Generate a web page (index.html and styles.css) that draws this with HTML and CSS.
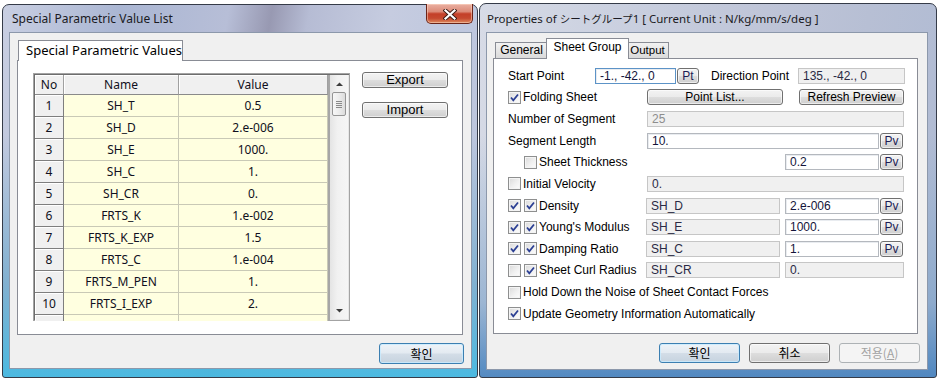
FILE: index.html
```html
<!DOCTYPE html>
<html>
<head>
<meta charset="utf-8">
<link rel="stylesheet" href="styles.css">
</head>
<body>
<div class="desk">
  <!-- LEFT WINDOW -->
  <div class="win win-left">
    <div class="titlebar">
      <span class="title">Special Parametric Value List</span>
      <span class="close">
        <svg width="14" height="11" viewBox="0 0 14 11"><path d="M2.5 1.5 L11.5 9.5 M11.5 1.5 L2.5 9.5" stroke="#3a1a14" stroke-width="4" stroke-linecap="square"/><path d="M2.5 1.5 L11.5 9.5 M11.5 1.5 L2.5 9.5" stroke="#ffffff" stroke-width="2.2" stroke-linecap="square"/></svg>
      </span>
    </div>
    <div class="client client-left">
      <div class="tabs-left"><div class="ltab">Special Parametric Values</div></div>
      <div class="lpanel">
        <div class="gridbox">
          <div class="gridarea">
            <div class="grow ghead"><div class="gc gno">No</div><div class="gc gname">Name</div><div class="gc gval">Value</div></div>
            <div class="grow"><div class="gc gno">1</div><div class="gc gname">SH_T</div><div class="gc gval">0.5</div></div>
            <div class="grow"><div class="gc gno">2</div><div class="gc gname">SH_D</div><div class="gc gval">2.e-006</div></div>
            <div class="grow"><div class="gc gno">3</div><div class="gc gname">SH_E</div><div class="gc gval">1000.</div></div>
            <div class="grow"><div class="gc gno">4</div><div class="gc gname">SH_C</div><div class="gc gval">1.</div></div>
            <div class="grow"><div class="gc gno">5</div><div class="gc gname">SH_CR</div><div class="gc gval">0.</div></div>
            <div class="grow"><div class="gc gno">6</div><div class="gc gname">FRTS_K</div><div class="gc gval">1.e-002</div></div>
            <div class="grow"><div class="gc gno">7</div><div class="gc gname">FRTS_K_EXP</div><div class="gc gval">1.5</div></div>
            <div class="grow"><div class="gc gno">8</div><div class="gc gname">FRTS_C</div><div class="gc gval">1.e-004</div></div>
            <div class="grow"><div class="gc gno">9</div><div class="gc gname">FRTS_M_PEN</div><div class="gc gval">1.</div></div>
            <div class="grow"><div class="gc gno">10</div><div class="gc gname">FRTS_I_EXP</div><div class="gc gval">2.</div></div>
            <div class="grow"><div class="gc gno"></div><div class="gc gname"></div><div class="gc gval"></div></div>
          </div>
          <div class="vscroll">
            <svg class="arr" width="9" height="6" viewBox="0 0 9 6"><path d="M1 5 L4.5 1.5 L8 5 Z" fill="#3c3c3c"/></svg>
            <div class="thumb"><i></i><i></i><i></i><i></i></div>
            <div class="track"></div>
            <svg class="arr" width="9" height="6" viewBox="0 0 9 6"><path d="M1 1 L4.5 4.5 L8 1 Z" fill="#3c3c3c"/></svg>
          </div>
        </div>
        <div class="sidebtns">
          <div class="btn sbtn">Export</div>
          <div class="btn sbtn">Import</div>
        </div>
      </div>
      <div class="footer-left"><div class="btn dbtn okl">확인</div></div>
    </div>
  </div>

  <!-- RIGHT WINDOW -->
  <div class="win win-right">
    <div class="titlebar tb-right">
      <span class="title">Properties of <span class="kana">シートグループ</span>1 [ Current Unit : N/kg/mm/s/deg ]</span>
    </div>
    <div class="client client-right">
      <div class="rtabs">
        <div class="rtab">General</div>
        <div class="rtab sel">Sheet Group</div>
        <div class="rtab">Output</div>
      </div>
      <div class="rpanel">
        <div class="frow">
          <span class="lab w87">Start Point</span>
          <span class="fld focus w81">-1., -42., 0</span>
          <span class="btn pb ml1 w22">Pt</span>
          <span class="lab ml12 w87">Direction Point</span>
          <span class="fld ro w107">135., -42., 0</span>
        </div>
        <div class="frow">
          <span class="left w139"><span class="cb on"><svg viewBox="0 0 11 11"><path d="M2 5.5 L4.3 8.3 L9 2.5" stroke="#2b3f93" stroke-width="1.8" fill="none"/></svg></span><span class="ct">Folding Sheet</span></span>
          <span class="btn w136">Point List...</span>
          <span class="btn ml16 w105">Refresh Preview</span>
        </div>
        <div class="frow">
          <span class="lab w139">Number of Segment</span>
          <span class="fld ro dis w257">25</span>
        </div>
        <div class="frow">
          <span class="lab w139">Segment Length</span>
          <span class="fld w232">10.</span>
          <span class="btn pb ml1 w23">Pv</span>
        </div>
        <div class="frow">
          <span class="left w277"><span class="cb ml16"></span><span class="ct">Sheet Thickness</span></span>
          <span class="fld w94">0.2</span>
          <span class="btn pb ml1 w23">Pv</span>
        </div>
        <div class="frow">
          <span class="left w139"><span class="cb"></span><span class="ct">Initial Velocity</span></span>
          <span class="fld ro w257">0.</span>
        </div>
        <div class="frow">
          <span class="left w138"><span class="cb on"><svg viewBox="0 0 11 11"><path d="M2 5.5 L4.3 8.3 L9 2.5" stroke="#2b3f93" stroke-width="1.8" fill="none"/></svg></span><span class="cb on ml3"><svg viewBox="0 0 11 11"><path d="M2 5.5 L4.3 8.3 L9 2.5" stroke="#2b3f93" stroke-width="1.8" fill="none"/></svg></span><span class="ct">Density</span></span>
          <span class="fld ro w134">SH_D</span>
          <span class="fld ml5 w94">2.e-006</span>
          <span class="btn pb ml1 w23">Pv</span>
        </div>
        <div class="frow">
          <span class="left w138"><span class="cb on"><svg viewBox="0 0 11 11"><path d="M2 5.5 L4.3 8.3 L9 2.5" stroke="#2b3f93" stroke-width="1.8" fill="none"/></svg></span><span class="cb on ml3"><svg viewBox="0 0 11 11"><path d="M2 5.5 L4.3 8.3 L9 2.5" stroke="#2b3f93" stroke-width="1.8" fill="none"/></svg></span><span class="ct">Young's Modulus</span></span>
          <span class="fld ro w134">SH_E</span>
          <span class="fld ml5 w94">1000.</span>
          <span class="btn pb ml1 w23">Pv</span>
        </div>
        <div class="frow">
          <span class="left w138"><span class="cb on"><svg viewBox="0 0 11 11"><path d="M2 5.5 L4.3 8.3 L9 2.5" stroke="#2b3f93" stroke-width="1.8" fill="none"/></svg></span><span class="cb on ml3"><svg viewBox="0 0 11 11"><path d="M2 5.5 L4.3 8.3 L9 2.5" stroke="#2b3f93" stroke-width="1.8" fill="none"/></svg></span><span class="ct">Damping Ratio</span></span>
          <span class="fld ro w134">SH_C</span>
          <span class="fld ml5 w94">1.</span>
          <span class="btn pb ml1 w23">Pv</span>
        </div>
        <div class="frow">
          <span class="left w138"><span class="cb"></span><span class="cb on ml3"><svg viewBox="0 0 11 11"><path d="M2 5.5 L4.3 8.3 L9 2.5" stroke="#2b3f93" stroke-width="1.8" fill="none"/></svg></span><span class="ct">Sheet Curl Radius</span></span>
          <span class="fld ro w134">SH_CR</span>
          <span class="fld ro ml5 w119">0.</span>
        </div>
        <div class="frow">
          <span class="left"><span class="cb"></span><span class="ct">Hold Down the Noise of Sheet Contact Forces</span></span>
        </div>
        <div class="frow">
          <span class="left"><span class="cb on"><svg viewBox="0 0 11 11"><path d="M2 5.5 L4.3 8.3 L9 2.5" stroke="#2b3f93" stroke-width="1.8" fill="none"/></svg></span><span class="ct">Update Geometry Information Automatically</span></span>
        </div>
      </div>
      <div class="footer-right">
        <div class="btn bbtn dbtn">확인</div>
        <div class="btn bbtn">취소</div>
        <div class="btn bbtn disabled">적용(<u>A</u>)</div>
      </div>
    </div>
  </div>
</div>
</body>
</html>
```
FILE: styles.css
```css
* { box-sizing: border-box; }
html, body { margin: 0; padding: 0; }
body {
  width: 940px; height: 381px; overflow: hidden; background: #ffffff;
  font-family: "Noto Sans", "Noto Sans CJK KR", sans-serif; color: #000;
}
.desk { position: relative; width: 940px; height: 381px; background: #ffffff; }

/* ---------- windows ---------- */
.win {
  position: absolute; display: flex; flex-direction: column;
  border: 1px solid #353b48; border-radius: 7px 7px 3px 3px;
}
.win-left {
  left: 2px; top: 4px; width: 476px; height: 374px; padding: 0 5px 8px 6px;
  background:
    linear-gradient(to bottom, rgba(255,255,255,0) 35%, rgba(110,170,205,0.75) 75%, rgba(70,185,225,0.95) 100%),
    linear-gradient(100deg, #c9cfe2 0%, #aab6d3 22%, #b7bed7 42%, #9899b2 50%, #b6bcd4 57%, #c6cce0 72%, #b8c3dc 100%);
}
.win-right {
  left: 479px; top: 3px; width: 458px; height: 375px; padding: 0 8px 7px 6px;
  background:
    linear-gradient(to bottom, rgba(255,255,255,0) 35%, rgba(120,160,200,0.6) 80%, rgba(70,130,190,0.9) 100%),
    linear-gradient(100deg, #d7dbe6 0%, #c9cfdf 30%, #bfc5d8 55%, #b7bfd4 75%, #aebad3 100%);
}
.titlebar { height: 27px; flex: none; display: flex; align-items: flex-start; }
.tb-right { height: 28px; }
.title { font-size: 12px; line-height: 14px; margin-top: 7px; padding-left: 3px; color: #1a1a22; white-space: nowrap; }
.tb-right .title { padding-left: 1px; margin-top: 8px; font-size: 11.5px; }
.kana { font-family: "Noto Sans CJK JP", sans-serif; font-size: 10.5px; }
.close {
  margin-left: auto; margin-right: -1px; margin-top: -1px; width: 47px; height: 20px;
  border: 1px solid #6b2418; border-top: none; border-radius: 0 0 5px 5px;
  background: linear-gradient(#eab0a2 0%, #dc8b78 40%, #c43f28 52%, #c5492f 75%, #de8a5e 100%);
  box-shadow: inset 0 0 0 1px rgba(255,220,200,0.5);
  display: flex; align-items: center; justify-content: center;
}
.close svg { display: block; margin-top: 1px; }

.client { flex: 1; background: #f0f0f0; border: 1px solid #8c98ab; display: flex; flex-direction: column; }

/* ---------- left client ---------- */
.client-left { padding: 7px 8px 0 7px; }
.tabs-left { height: 20px; display: flex; align-items: flex-end; }
.ltab {
  position: relative; z-index: 2; margin-left: 1px; margin-bottom: -1px;
  width: 165px; height: 21px; border: 1px solid #898c95; border-bottom: none;
  background: #fff; font-size: 13px; line-height: 19px; padding-left: 7px; white-space: nowrap;
}
.lpanel {
  height: 275px; border: 1px solid #898c95; background: #fff;
  display: flex; align-items: flex-start; padding: 12px 0 0 15px;
}
.gridbox {
  width: 317px; height: 248px; display: flex; border: 1px solid #a3a3a3;
  box-shadow: inset 1px 1px 0 #6d6d6d, inset -1px -1px 0 #e6e6e6;
  padding: 1px 1px 1px 1px; background: #ffffe0;
}
.gridarea { width: 295px; height: 246px; overflow: hidden; border-right: 2px solid #a6a6a6; }
.grow { display: grid; grid-template-columns: 29px 115px 149px; height: 22px; }
.ghead { height: 20px; }
.gc {
  display: flex; align-items: center; justify-content: center;
  font-size: 12px; line-height: 14px; color: #101020; white-space: nowrap;
  border-right: 1px solid #c9c9b6; border-bottom: 1px solid #c9c9b6; background: #ffffe0;
}
.gno { background: #f0f0f0; border-right: 1px solid #7e7e7e; border-bottom: 1px solid #7e7e7e; box-shadow: inset 1px 1px 0 #ffffff; }
.ghead .gc { background: #f0f0f0; border-bottom: 1px solid #8a8a8a; border-right: 1px solid #a0a0a0; box-shadow: inset 1px 1px 0 #ffffff; }
.vscroll {
  width: 18px; display: flex; flex-direction: column; align-items: center;
  background: linear-gradient(to right, #e4e4e4, #f1f1f1 40%, #f5f5f5);
}
.vscroll .arr { display: block; margin-top: 6px; flex: none; }
.vscroll .arr:last-child { margin-top: 0; margin-bottom: 5px; }
.thumb {
  margin-top: 5px; width: 14px; height: 24px; border: 1px solid #959595; border-radius: 2px;
  background: linear-gradient(to right, #f7f7f7, #ececec 50%, #dcdcdc);
  display: flex; flex-direction: column; align-items: center; justify-content: center; gap: 1px;
}
.thumb i { display: block; width: 6px; height: 1px; background: #8a8a8a; }
.track { flex: 1; }
.sidebtns { margin-left: 12px; display: flex; flex-direction: column; gap: 14px; margin-top: -1px; }

/* buttons */
.btn {
  display: flex; align-items: center; justify-content: center; flex: none;
  height: 16px; border: 1px solid #707070; border-radius: 3px;
  background: linear-gradient(#f3f3f3 0%, #ebebeb 48%, #dddddd 52%, #cfcfcf 100%);
  font-family: "Liberation Sans", Arial, sans-serif; font-size: 12px; line-height: 14px; color: #000;
  white-space: nowrap; box-shadow: inset 0 0 0 1px rgba(255,255,255,0.6);
}
.sbtn { width: 86px; font-size: 13px; }
.dbtn {
  border-color: #3c7fb1;
  background: linear-gradient(#eef3f8 0%, #e3eaf1 48%, #d3dde7 52%, #c6d3df 100%);
  box-shadow: inset 0 0 0 1px rgba(200,235,255,0.8);
}
.footer-left { display: flex; justify-content: flex-end; margin-top: 8px; margin-right: -1px; }
.okl { width: 85px; height: 21px; font-family: "Noto Sans CJK KR", sans-serif; font-size: 12px; }

/* ---------- right client ---------- */
.client-right { padding: 5px 0 0 6px; }
.rtabs { height: 20px; display: flex; align-items: flex-end; padding-left: 2px; }
.rtab {
  height: 16px; border: 1px solid #898c95; border-bottom: none; margin-left: -1px;
  background: linear-gradient(#f2f2f2, #e6e6e6 50%, #dadada);
  font-family: "Liberation Sans", Arial, sans-serif; font-size: 12px; line-height: 15px;
  padding: 0 4px; white-space: nowrap; color: #000; text-align: center;
}
.rtab:first-child { margin-left: 0; width: 53px; padding: 0 2px; }
.rtab:last-child { width: 43px; padding: 0 1px; font-size: 11.5px; }
.rtab.sel {
  position: relative; z-index: 2; height: 21px; margin: 0 -2px -1px -2px; width: 83px;
  background: #fff; line-height: 17px; padding: 0 4px;
}
.rpanel {
  width: 425px; height: 276px; border: 1px solid #898c95; background: #fff;
  padding: 6px 0 0 14px;
  font-family: "Liberation Sans", Arial, sans-serif; font-size: 12px;
}
.frow { height: 21.64px; display: flex; align-items: center; white-space: nowrap; }
.lab, .left { display: flex; align-items: center; flex: none; line-height: 14px; }
.ct { margin-left: 2px; line-height: 14px; }
.cb {
  width: 13px; height: 13px; flex: none; border: 1px solid #8e8f8f;
  background: linear-gradient(135deg, #d9d9d9 0%, #f0f0f0 55%, #fdfdfd 100%);
  box-shadow: inset 0 0 0 1px #f4f4f4; display: flex; align-items: center; justify-content: center;
}
.cb svg { width: 11px; height: 11px; display: block; }
.fld {
  height: 16px; flex: none; display: flex; align-items: center; padding-left: 4px;
  border: 1px solid #b4b8be; background: #fff; color: #14143a; line-height: 14px; overflow: hidden;
  box-shadow: inset 1px 1px 0 #e9ecf0;
}
.fld.focus { border-color: #5c93c7; }
.fld.ro { background: #f0f0f0; border-color: #c6c6c6; box-shadow: none; color: #2a2a44; }
.fld.dis { color: #8d8d8d; }
.pb { color: #1d1d55; }
.w22 { width: 22px; } .w23 { width: 23px; } .w81 { width: 81px; } .w87 { width: 87px; }
.w94 { width: 94px; } .w105 { width: 105px; } .w107 { width: 107px; } .w119 { width: 119px; }
.w134 { width: 134px; } .w136 { width: 136px; } .w138 { width: 138px; } .w139 { width: 139px; }
.w232 { width: 232px; } .w257 { width: 257px; } .w277 { width: 277px; }
.ml1 { margin-left: 1px; } .ml3 { margin-left: 3px; } .ml5 { margin-left: 5px; }
.ml12 { margin-left: 12px; } .ml16 { margin-left: 16px; }

.footer-right { display: flex; justify-content: flex-end; gap: 9px; margin-top: 9px; padding-right: 7px; }
.bbtn { width: 81px; height: 20px; font-family: "Noto Sans CJK KR", sans-serif; font-size: 12px; }
.bbtn.disabled { color: #a2a2a2; border-color: #adb2b5; background: #f4f4f4; box-shadow: none; }
.bbtn u { text-decoration: underline; }
```
